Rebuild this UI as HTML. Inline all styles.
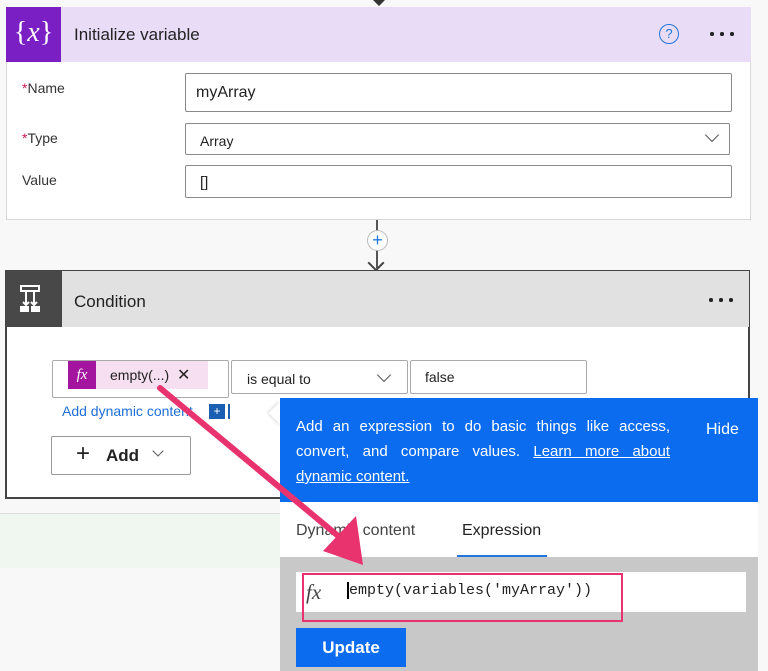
<!DOCTYPE html>
<html><head><meta charset="utf-8"><style>
*{box-sizing:border-box;margin:0;padding:0}
body{width:768px;height:671px;background:#f8f8f8;font-family:"Liberation Sans",sans-serif;position:relative;overflow:hidden;color:#222}
.a{position:absolute}
.inp{position:absolute;background:#fff;border:1px solid #8a8a8a;border-radius:2px;font-size:15px;color:#222}
.lbl{position:absolute;font-size:14px;color:#333}
.lbl b{color:#d0184f;font-weight:normal}
.dots{position:absolute;width:30px;height:4px}
.dots i{position:absolute;top:0;width:3.5px;height:3.5px;border-radius:50%;background:#222}
</style></head><body>
<div class="a" style="left:373px;top:0;width:0;height:0;border-left:6px solid transparent;border-right:6px solid transparent;border-top:6px solid #333"></div>
<!-- init card -->
<div class="a" style="left:6px;top:7px;width:745px;height:213px;background:#fff;border:1px solid #d8d8d8"></div>
<div class="a" style="left:6px;top:7px;width:745px;height:55px;background:#e9dcf7"></div>
<div class="a" style="left:6px;top:7px;width:55px;height:55px;background:#7a1fc4;color:#fff;font-family:'Liberation Serif',serif;font-size:28px;text-align:center;line-height:52px">{<i>x</i>}</div>
<div class="a" style="left:74px;top:25px;font-size:17px;color:#222">Initialize variable</div>
<div class="a" style="left:659px;top:24px;width:20px;height:20px;border:1.5px solid #2277dd;border-radius:50%;color:#2277dd;font-size:13px;text-align:center;line-height:17px">?</div>
<div class="dots" style="left:710px;top:32px"><i style="left:0"></i><i style="left:10px"></i><i style="left:20px"></i></div>
<div class="lbl" style="left:22px;top:80px"><b>*</b>Name</div>
<div class="lbl" style="left:22px;top:130px"><b>*</b>Type</div>
<div class="lbl" style="left:22px;top:172px">Value</div>
<div class="inp" style="left:185px;top:73px;width:547px;height:39px;padding:10px 10px;font-size:16px">myArray</div>
<div class="inp" style="left:185px;top:123px;width:545px;height:32px;padding:9px 14px;font-size:14px">Array<span class="a" style="right:12px;top:6px;width:10px;height:10px;border-right:1px solid #555;border-bottom:1px solid #555;transform:rotate(45deg)"></span></div>
<div class="inp" style="left:185px;top:165px;width:547px;height:33px;padding:8px 14px;font-size:15px">[]</div>
<!-- connector -->
<div class="a" style="left:376px;top:220px;width:2px;height:48px;background:#555"></div>
<div class="a" style="left:367px;top:230px;width:21px;height:21px;border-radius:50%;background:#fff;border:1px solid #bbb;color:#2277dd;text-align:center;line-height:18px;font-size:18px">+</div>
<div class="a" style="left:370px;top:257px;width:12px;height:12px;border-right:2px solid #444;border-bottom:2px solid #444;transform:rotate(45deg)"></div>
<!-- green strip -->
<div class="a" style="left:0;top:513px;width:290px;height:55px;background:#f0f6f0;border-top:1px solid #ddd"></div>
<!-- condition card -->
<div class="a" style="left:5px;top:270px;width:745px;height:229px;background:#fff;border:2px solid #444"></div>
<div class="a" style="left:6px;top:271px;width:743px;height:56px;background:#e1e1e1"></div>
<div class="a" style="left:6px;top:271px;width:56px;height:56px;background:#484848">
<svg width="56" height="56"><g fill="none" stroke="#fff" stroke-width="2"><rect x="15" y="15" width="18" height="5" fill="none"/><path d="M20 20v14M28 20v14M17 31l3 3 3-3M25 31l3 3 3-3"/></g><rect x="14" y="35" width="9" height="6" fill="#fff"/><rect x="25" y="35" width="9" height="6" fill="#fff"/></svg></div>
<div class="a" style="left:74px;top:292px;font-size:17px">Condition</div>
<div class="dots" style="left:709px;top:298px"><i style="left:0"></i><i style="left:10px"></i><i style="left:20px"></i></div>
<div class="inp" style="left:52px;top:360px;width:177px;height:38px;border-color:#aaa"></div>
<div class="a" style="left:68px;top:361px;width:28px;height:28px;background:#a3159f;color:#fff;font-family:'Liberation Serif',serif;font-style:italic;text-align:center;line-height:28px;font-size:15px">fx</div>
<div class="a" style="left:96px;top:361px;width:112px;height:28px;background:#f5dff0;font-size:14px;line-height:28px;padding-left:14px">empty(...) <span style="font-size:16px;margin-left:4px">✕</span></div>
<div class="inp" style="left:231px;top:360px;width:177px;height:34px;border-color:#aaa;font-size:14px;padding:10px 15px">is equal to<span class="a" style="right:18px;top:9px;width:10px;height:10px;border-right:1px solid #555;border-bottom:1px solid #555;transform:rotate(45deg)"></span></div>
<div class="inp" style="left:410px;top:360px;width:177px;height:34px;border-color:#aaa;font-size:14px;padding:8px 14px">false</div>
<div class="a" style="left:62px;top:403px;font-size:14px;color:#1f6fd8">Add dynamic content</div>
<div class="a" style="left:209px;top:404px;width:19px;height:15px;background:#1b5fb3;color:#fff;font-size:12px;text-align:center;line-height:15px;border-right:3px solid #fff;box-shadow:2px 0 0 #1b5fb3">+</div>
<div class="inp" style="left:51px;top:436px;width:140px;height:39px;border-color:#999;font-size:17px;font-weight:bold;padding:9px 0 0 28px"><span style="font-weight:normal;font-size:24px;position:absolute;left:24px;top:3px">+</span><span style="margin-left:26px">Add</span><span class="a" style="left:102px;top:10px;width:8px;height:8px;border-right:1px solid #555;border-bottom:1px solid #555;transform:rotate(45deg)"></span></div>
<!-- popup -->
<div class="a" style="left:272px;top:405px;width:16px;height:16px;background:#fff;box-shadow:-1px 1px 3px rgba(0,0,0,.15);transform:rotate(45deg)"></div>
<div class="a" style="left:280px;top:398px;width:478px;height:104px;background:#0b6cf0;color:#fff;font-size:15px;line-height:25px;padding:16px 16px">
<div style="width:374px;text-align:justify">Add an expression to do basic things like access, convert, and compare values. <u>Learn more about dynamic content.</u></div>
<div class="a" style="left:426px;top:19px;font-size:16px">Hide</div></div>
<div class="a" style="left:280px;top:502px;width:478px;height:56px;background:#fff"></div>
<div class="a" style="left:296px;top:522px;font-size:16px;color:#444">Dynamic content</div>
<div class="a" style="left:462px;top:522px;font-size:16px;color:#222">Expression</div>
<div class="a" style="left:457px;top:555px;width:90px;height:3px;background:#2277dd"></div>
<div class="a" style="left:280px;top:557px;width:478px;height:114px;background:#c8c8c8"></div>
<div class="a" style="left:296px;top:572px;width:450px;height:40px;background:#fff"></div>
<div class="a" style="left:306px;top:580px;font-family:'Liberation Serif',serif;font-style:italic;font-size:21px;color:#444">fx</div>
<div class="a" style="left:347px;top:582px;font-family:'Liberation Mono',monospace;font-size:15px;color:#222;border-left:2px solid #000">empty(variables('myArray'))</div>
<div class="a" style="left:302px;top:573px;width:321px;height:49px;border:2.5px solid #e8336f"></div>
<div class="a" style="left:296px;top:628px;width:110px;height:39px;background:#0b6cf0;color:#fff;font-size:17px;font-weight:bold;text-align:center;line-height:39px">Update</div>
<!-- arrow -->
<svg class="a" style="left:0;top:0" width="768" height="671"><line x1="160" y1="388" x2="343" y2="540" stroke="#e8336f" stroke-width="6" stroke-linecap="round"/><polygon points="363,565 323,551 356,516" fill="#e8336f"/></svg>
</body></html>
